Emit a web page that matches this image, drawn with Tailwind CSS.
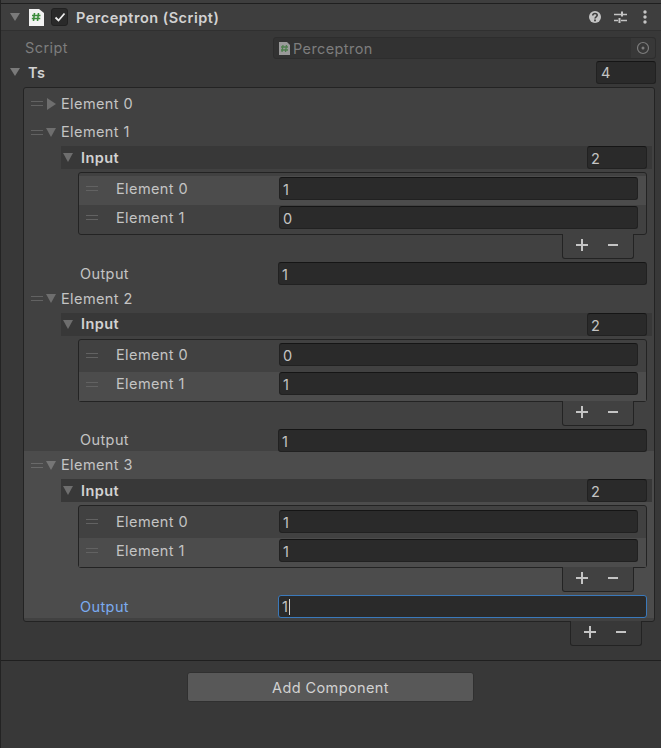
<!DOCTYPE html>
<html><head><meta charset="utf-8"><script src="https://cdn.jsdelivr.net/npm/@tailwindcss/browser@4"></script></head>
<body class="m-0">
<div class="relative w-[661px] h-[748px] overflow-hidden bg-[#383838] border-l border-[#232323] font-[Inter,sans-serif] text-[14.5px] tracking-[0.4px] text-[#c4c4c4]">
  <div class="h-[3px] bg-[#3e3e3e]"></div>
  <!-- header -->
  <div class="h-[28px] bg-[#3e3e3e] border-y border-[#1f1f1f] [border-bottom-color:#303030] flex items-center pl-[8px] pr-[14px]">
    <svg width="12" height="10" class="mr-[8px] shrink-0" viewBox="0 0 12 10"><polygon points="1,1 11,1 6,9" fill="#7a7a7a"/></svg>
    <svg width="15" height="18" class="mr-[7px] shrink-0" viewBox="0 0 15 18"><path d="M0 1h10l5 4v13H0z" fill="#f2f2f2"/><path d="M5.500 5 4.500 13M9.500 5 8.500 13M3 7.500h8.500M2.800 10.500h8.500" stroke="#3c8c3c" stroke-width="1.600" fill="none"/></svg>
    <div class="w-[17px] h-[18px] mr-[8px] shrink-0 rounded-[3px] bg-[#2a2a2a] border border-[#212121] flex items-center justify-center"><svg width="12" height="10" viewBox="0 0 12 10"><path d="M1.500 5.500 4.500 8.500 10.500 1.500" stroke="#ececec" stroke-width="1.800" fill="none"/></svg></div>
    <span class="font-semibold tracking-[0.5px] pt-px text-[#d2d2d2]">Perceptron (Script)</span>
    <div class="ml-auto flex items-center">
      <svg width="14" height="14" viewBox="0 0 14 14" class="mr-[12px]"><circle cx="7" cy="7" r="6" fill="#c4c4c4"/><path d="M4.800 5.400C4.800 2.900 9.200 2.900 9.200 5.300 9.200 6.800 7 6.800 7 8.600" stroke="#3e3e3e" stroke-width="1.600" fill="none"/><rect x="6.100" y="9.500" width="1.800" height="1.800" fill="#3e3e3e"/></svg>
      <svg width="13" height="14" viewBox="0 0 13 14" class="mr-[16px]"><path d="M0 4.500h13M0 10.500h4M7 10.500h6" stroke="#c4c4c4" stroke-width="1.300"/><path d="M8 1.500v5M5.500 8v5" stroke="#c4c4c4" stroke-width="2"/></svg>
      <svg width="4" height="14" viewBox="0 0 4 14"><circle cx="2" cy="2" r="1.700" fill="#c4c4c4"/><circle cx="2" cy="7" r="1.700" fill="#c4c4c4"/><circle cx="2" cy="12" r="1.700" fill="#c4c4c4"/></svg>
    </div>
  </div>
  <!-- script row -->
  <div class="h-[29px] flex items-center pt-[5px] pl-[24px] pr-[5px] text-[#7d7d7d]">
    <span>Script</span>
    <div class="ml-auto w-[383px] h-[22px] rounded-[3px] bg-[#323232] border border-[#2d2d2d] flex items-center pl-[5px]">
      <svg width="11" height="13" viewBox="0 0 11 13" class="mr-[3px] shrink-0"><path d="M0 0h8l3 3v10H0z" fill="#9a9a9a"/><path d="M4 3 3 10M7.500 3 6.500 10M2 5h7M2 8h7" stroke="#4f7f4f" stroke-width="1.300" fill="none"/></svg>
      <span class="pt-px">Perceptron</span>
      <div class="ml-auto w-[24px] h-[20px] bg-[#383838] rounded-r-[3px] flex items-center justify-center"><svg width="14" height="14" viewBox="0 0 14 14"><circle cx="7" cy="7" r="5.500" stroke="#7d7d7d" stroke-width="1.200" fill="none"/><circle cx="7" cy="7" r="1.500" fill="#7d7d7d"/></svg></div>
    </div>
  </div>
  <!-- Ts row -->
  <div class="h-[24px] flex items-center pl-[8px] pr-[5px]">
    <svg width="12" height="10" class="mr-[7px] shrink-0" viewBox="0 0 12 10"><polygon points="1,1 11,1 6,9" fill="#7a7a7a"/></svg>
    <span class="font-semibold pt-px text-[#d2d2d2]">Ts</span>
    <div class="ml-auto w-[60px] h-[23px] rounded-[3px] bg-[#2a2a2a] border border-[#212121] [border-top-color:#151515] pl-[4px] leading-[22px]">4</div>
  </div>
  <!-- list -->
  <div class="mt-[3px] ml-[22px] w-[632px] h-[535px] bg-[#414141] border border-[#232323] rounded-[3px]">
    <div class="h-[30px] pt-px flex items-center pl-[7px]">
      <div class="w-[12px] h-[5px] border-y border-[#626262] mr-[4px]"></div>
      <svg width="9" height="12" viewBox="0 0 9 12" class="mr-[5px]"><polygon points="0,0 9,6 0,12" fill="#6e6e6e"/></svg>
      <span>Element 0</span>
    </div>

    <!-- block 1 -->
    <div class="h-[166.5px]">
      <div class="h-[28px] flex items-center pl-[7px]">
        <div class="w-[12px] h-[5px] border-y border-[#626262] mr-[3px]"></div>
        <svg width="10" height="9" viewBox="0 0 10 9" class="mr-[5px]"><polygon points="0,0 10,0 5,9" fill="#6e6e6e"/></svg>
        <span>Element 1</span>
      </div>
      <div class="ml-[37px] mr-[2px] h-[23px] bg-[#383838] flex items-center pl-[2px] pr-[5px]">
        <svg width="10" height="9" viewBox="0 0 10 9" class="mr-[8px] shrink-0"><polygon points="0,0 10,0 5,9" fill="#6e6e6e"/></svg>
        <span class="font-semibold text-[#d2d2d2]">Input</span>
        <div class="ml-auto w-[60px] h-[23px] rounded-[3px] bg-[#2a2a2a] border border-[#212121] [border-top-color:#151515] pl-[3px] leading-[23px]">2</div>
      </div>
      <div class="mt-[3px] ml-[54px] mr-[7px] h-[63px] rounded-[3px] border border-[#232323] pt-[3px]">
        <div class="h-[29px] bg-[#4c4c4c] flex items-center pl-[7px] pr-[8px]"><div class="w-[12px] h-[5px] -mt-[4px] border-y border-[#626262] mr-[18px]"></div><span class="-mt-[4px]">Element 0</span><div class="ml-auto w-[359px] h-[23px] -mt-[5px] rounded-[3px] bg-[#2a2a2a] border border-[#212121] [border-top-color:#151515] pl-[3px] leading-[23px]">1</div></div>
        <div class="h-[29px] flex items-center pl-[7px] pr-[8px]"><div class="w-[12px] h-[5px] -mt-[4px] border-y border-[#626262] mr-[18px]"></div><span class="-mt-[4px]">Element 1</span><div class="ml-auto w-[359px] h-[23px] -mt-[5px] rounded-[3px] bg-[#2a2a2a] border border-[#212121] [border-top-color:#151515] pl-[3px] leading-[23px]">0</div></div>
      </div>
      <div class="flex justify-end mr-[20px] -mt-px"><div class="w-[72px] h-[25px] bg-[#414141] rounded-b-[3px] border border-t-0 border-[#232323] flex items-center pl-[13px] pb-[2px] gap-[20px]"><svg width="12" height="12" viewBox="0 0 12 12"><path d="M6 0v12M0 6h12" stroke="#c4c4c4" stroke-width="2"/></svg><svg width="10" height="12" viewBox="0 0 10 12"><path d="M0 6h10" stroke="#c4c4c4" stroke-width="2"/></svg></div></div>
      <div class="mt-[3px] h-[23px] flex items-center pl-[56px] pr-[7px]"><span>Output</span><div class="ml-auto w-[369px] h-[23px] rounded-[3px] bg-[#2a2a2a] border border-[#212121] [border-top-color:#151515] pl-[3px] leading-[23px]">1</div></div>
    </div>

    <!-- block 2 -->
    <div class="h-[166.5px]">
      <div class="h-[28px] flex items-center pl-[7px]">
        <div class="w-[12px] h-[5px] border-y border-[#626262] mr-[3px]"></div>
        <svg width="10" height="9" viewBox="0 0 10 9" class="mr-[5px]"><polygon points="0,0 10,0 5,9" fill="#6e6e6e"/></svg>
        <span>Element 2</span>
      </div>
      <div class="ml-[37px] mr-[2px] h-[23px] bg-[#383838] flex items-center pl-[2px] pr-[5px]">
        <svg width="10" height="9" viewBox="0 0 10 9" class="mr-[8px] shrink-0"><polygon points="0,0 10,0 5,9" fill="#6e6e6e"/></svg>
        <span class="font-semibold text-[#d2d2d2]">Input</span>
        <div class="ml-auto w-[60px] h-[23px] rounded-[3px] bg-[#2a2a2a] border border-[#212121] [border-top-color:#151515] pl-[3px] leading-[23px]">2</div>
      </div>
      <div class="mt-[3px] ml-[54px] mr-[7px] h-[63px] rounded-[3px] border border-[#232323] pt-[3px]">
        <div class="h-[29px] flex items-center pl-[7px] pr-[8px]"><div class="w-[12px] h-[5px] -mt-[4px] border-y border-[#626262] mr-[18px]"></div><span class="-mt-[4px]">Element 0</span><div class="ml-auto w-[359px] h-[23px] -mt-[5px] rounded-[3px] bg-[#2a2a2a] border border-[#212121] [border-top-color:#151515] pl-[3px] leading-[23px]">0</div></div>
        <div class="h-[29px] bg-[#4c4c4c] flex items-center pl-[7px] pr-[8px]"><div class="w-[12px] h-[5px] -mt-[4px] border-y border-[#626262] mr-[18px]"></div><span class="-mt-[4px]">Element 1</span><div class="ml-auto w-[359px] h-[23px] -mt-[5px] rounded-[3px] bg-[#2a2a2a] border border-[#212121] [border-top-color:#151515] pl-[3px] leading-[23px]">1</div></div>
      </div>
      <div class="flex justify-end mr-[20px] -mt-px"><div class="w-[72px] h-[25px] bg-[#414141] rounded-b-[3px] border border-t-0 border-[#232323] flex items-center pl-[13px] pb-[2px] gap-[20px]"><svg width="12" height="12" viewBox="0 0 12 12"><path d="M6 0v12M0 6h12" stroke="#c4c4c4" stroke-width="2"/></svg><svg width="10" height="12" viewBox="0 0 10 12"><path d="M0 6h10" stroke="#c4c4c4" stroke-width="2"/></svg></div></div>
      <div class="mt-[3px] h-[23px] flex items-center pl-[56px] pr-[7px]"><span>Output</span><div class="ml-auto w-[369px] h-[23px] rounded-[3px] bg-[#2a2a2a] border border-[#212121] [border-top-color:#151515] pl-[3px] leading-[23px]">1</div></div>
    </div>

    <!-- block 3 -->
    <div class="h-[167px] bg-[#4c4c4c]">
      <div class="h-[28px] flex items-center pl-[7px]">
        <div class="w-[12px] h-[5px] border-y border-[#6a6a6a] mr-[3px]"></div>
        <svg width="10" height="9" viewBox="0 0 10 9" class="mr-[5px]"><polygon points="0,0 10,0 5,9" fill="#767676"/></svg>
        <span>Element 3</span>
      </div>
      <div class="ml-[37px] mr-[2px] h-[23px] bg-[#383838] flex items-center pl-[2px] pr-[5px]">
        <svg width="10" height="9" viewBox="0 0 10 9" class="mr-[8px] shrink-0"><polygon points="0,0 10,0 5,9" fill="#6e6e6e"/></svg>
        <span class="font-semibold text-[#d2d2d2]">Input</span>
        <div class="ml-auto w-[60px] h-[23px] rounded-[3px] bg-[#2a2a2a] border border-[#212121] [border-top-color:#151515] pl-[3px] leading-[23px]">2</div>
      </div>
      <div class="mt-[3px] ml-[54px] mr-[7px] h-[63px] rounded-[3px] border border-[#232323] bg-[#414141] pt-[3px]">
        <div class="h-[29px] flex items-center pl-[7px] pr-[8px]"><div class="w-[12px] h-[5px] -mt-[4px] border-y border-[#626262] mr-[18px]"></div><span class="-mt-[4px]">Element 0</span><div class="ml-auto w-[359px] h-[23px] -mt-[5px] rounded-[3px] bg-[#2a2a2a] border border-[#212121] [border-top-color:#151515] pl-[3px] leading-[23px]">1</div></div>
        <div class="h-[29px] bg-[#4c4c4c] flex items-center pl-[7px] pr-[8px]"><div class="w-[12px] h-[5px] -mt-[4px] border-y border-[#626262] mr-[18px]"></div><span class="-mt-[4px]">Element 1</span><div class="ml-auto w-[359px] h-[23px] -mt-[5px] rounded-[3px] bg-[#2a2a2a] border border-[#212121] [border-top-color:#151515] pl-[3px] leading-[23px]">1</div></div>
      </div>
      <div class="flex justify-end mr-[20px] -mt-px"><div class="w-[72px] h-[25px] bg-[#414141] rounded-b-[3px] border border-t-0 border-[#232323] flex items-center pl-[13px] pb-[2px] gap-[20px]"><svg width="12" height="12" viewBox="0 0 12 12"><path d="M6 0v12M0 6h12" stroke="#c4c4c4" stroke-width="2"/></svg><svg width="10" height="12" viewBox="0 0 10 12"><path d="M0 6h10" stroke="#c4c4c4" stroke-width="2"/></svg></div></div>
      <div class="mt-[3px] h-[23px] flex items-center pl-[56px] pr-[7px]"><span class="text-[#7babf0]">Output</span><div class="ml-auto w-[369px] h-[23px] rounded-[3px] bg-[#2a2a2a] border border-[#3a79bb] pl-[3px] flex items-center"><span>1</span><span class="w-px h-[16px] bg-[#d2d2d2] ml-px"></span></div></div>
    </div>
  </div>
  <!-- outer footer -->
  <div class="flex justify-end mr-[19px] -mt-px"><div class="w-[72px] h-[25px] bg-[#383838] rounded-b-[3px] border border-t-0 border-[#232323] flex items-center pl-[13px] pb-[2px] gap-[20px]"><svg width="12" height="12" viewBox="0 0 12 12"><path d="M6 0v12M0 6h12" stroke="#c4c4c4" stroke-width="2"/></svg><svg width="10" height="12" viewBox="0 0 10 12"><path d="M0 6h10" stroke="#c4c4c4" stroke-width="2"/></svg></div></div>
  <div class="mt-[14px] border-t border-[#1f1f1f] pt-[11px] pr-px flex justify-center">
    <div class="w-[287px] h-[30px] pt-px rounded-[3px] bg-[#585858] border border-[#303030] flex items-center justify-center text-[#d2d2d2]">Add Component</div>
  </div>
</div>
</body></html>
